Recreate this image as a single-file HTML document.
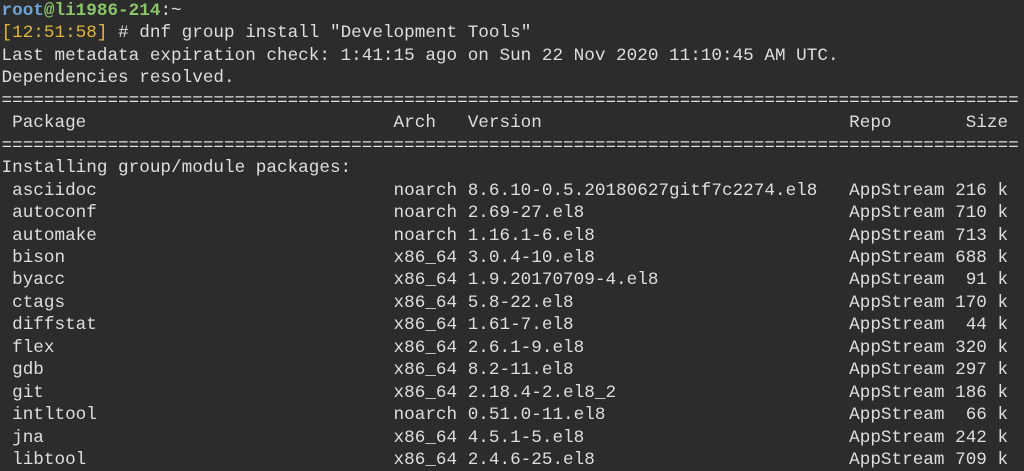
<!DOCTYPE html>
<html><head><meta charset="utf-8"><style>
html,body{margin:0;padding:0;background:#2c2c2c;width:1024px;height:471px;overflow:hidden}
pre{margin:0;padding:0 0 0 1.5px;font-family:"Liberation Mono",monospace;font-size:17.66px;line-height:22.45px;color:#dedede;white-space:pre;position:relative;top:0px}
.b{color:#6ea3d4;font-weight:bold}.g{color:#8cc56a;font-weight:bold}.y{color:#e0b63e}
</style></head><body><pre><span class="b">root</span><span class="g">@li1986-214</span>:~
<span class="y">[12:51:58]</span> # dnf group install "Development Tools"
Last metadata expiration check: 1:41:15 ago on Sun 22 Nov 2020 11:10:45 AM UTC.
Dependencies resolved.
================================================================================================
 Package                             Arch   Version                             Repo       Size
================================================================================================
Installing group/module packages:
 asciidoc                            noarch 8.6.10-0.5.20180627gitf7c2274.el8   AppStream 216 k
 autoconf                            noarch 2.69-27.el8                         AppStream 710 k
 automake                            noarch 1.16.1-6.el8                        AppStream 713 k
 bison                               x86_64 3.0.4-10.el8                        AppStream 688 k
 byacc                               x86_64 1.9.20170709-4.el8                  AppStream  91 k
 ctags                               x86_64 5.8-22.el8                          AppStream 170 k
 diffstat                            x86_64 1.61-7.el8                          AppStream  44 k
 flex                                x86_64 2.6.1-9.el8                         AppStream 320 k
 gdb                                 x86_64 8.2-11.el8                          AppStream 297 k
 git                                 x86_64 2.18.4-2.el8_2                      AppStream 186 k
 intltool                            noarch 0.51.0-11.el8                       AppStream  66 k
 jna                                 x86_64 4.5.1-5.el8                         AppStream 242 k
 libtool                             x86_64 2.4.6-25.el8                        AppStream 709 k
</pre></body></html>
